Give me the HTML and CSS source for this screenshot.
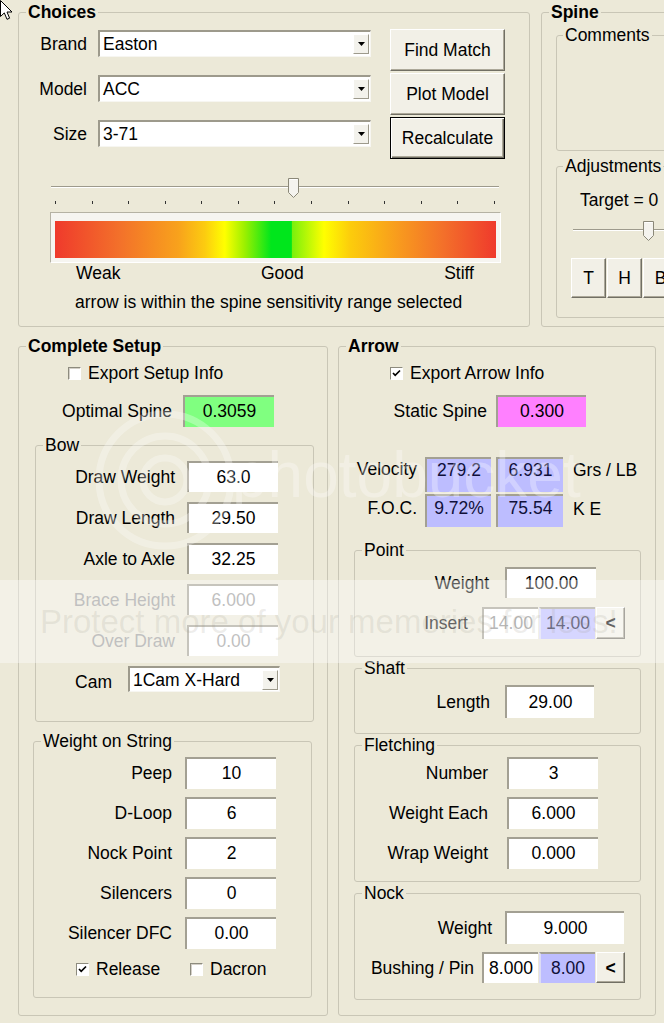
FILE: index.html
```html
<!DOCTYPE html>
<html>
<head>
<meta charset="utf-8">
<title>Spine Calculator</title>
<link rel="stylesheet" href="styles.css">
</head>
<body>
<div class="app">
  <div class="toprow">
    <fieldset class="grp choices">
      <legend class="title">Choices</legend>
      <div class="ch-top">
        <div class="ch-form">
          <div class="frow"><span class="flab">Brand</span><div class="combo"><span class="cval">Easton</span><span class="cbtn"><svg width="7" height="4" viewBox="0 0 7 4"><path d="M0 0H7L3.5 4Z" fill="#000"/></svg></span></div></div>
          <div class="frow"><span class="flab">Model</span><div class="combo"><span class="cval">ACC</span><span class="cbtn"><svg width="7" height="4" viewBox="0 0 7 4"><path d="M0 0H7L3.5 4Z" fill="#000"/></svg></span></div></div>
          <div class="frow"><span class="flab">Size</span><div class="combo"><span class="cval">3-71</span><span class="cbtn"><svg width="7" height="4" viewBox="0 0 7 4"><path d="M0 0H7L3.5 4Z" fill="#000"/></svg></span></div></div>
        </div>
        <div class="ch-btns">
          <button class="btn">Find Match</button>
          <button class="btn">Plot Model</button>
          <button class="btn btn-default">Recalculate</button>
        </div>
      </div>
      <div class="slider main-slider">
        <div class="track"></div>
        <svg class="thumb main-thumb" width="11" height="20" viewBox="0 0 11 20"><path d="M0.5 0.5H10.5V14.5L5.5 19.5L0.5 14.5Z" fill="#f4f3ee" stroke="#8b8878"/><path d="M1.5 1.5H9.5" stroke="#fff"/></svg>
      </div>
      <div class="ticks"><i></i><i></i><i></i><i></i><i></i><i></i><i></i><i></i><i></i><i></i><i></i><i></i><i></i></div>
      <div class="gauge"><div class="gauge-bar"></div></div>
      <div class="glabels"><span>Weak</span><span>Good</span><span>Stiff</span></div>
      <div class="msg">arrow is within the spine sensitivity range selected</div>
    </fieldset>

    <fieldset class="grp spine">
      <legend class="title">Spine</legend>
      <fieldset class="grp comments"><legend>Comments</legend></fieldset>
      <fieldset class="grp adjust">
        <legend>Adjustments</legend>
        <div class="target">Target = 0</div>
        <div class="slider adj-slider">
          <div class="track"></div>
          <svg class="thumb adj-thumb" width="11" height="20" viewBox="0 0 11 20"><path d="M0.5 0.5H10.5V14.5L5.5 19.5L0.5 14.5Z" fill="#f4f3ee" stroke="#8b8878"/><path d="M1.5 1.5H9.5" stroke="#fff"/></svg>
        </div>
        <div class="tbtns"><button class="btn tb-btn">T</button><button class="btn tb-btn">H</button><button class="btn tb-btn">B</button></div>
      </fieldset>
    </fieldset>
  </div>

  <div class="botrow">
    <fieldset class="grp setup">
      <legend class="title">Complete Setup</legend>
      <div class="cbrow setup-cb"><span class="cb"></span><span>Export Setup Info</span></div>
      <div class="hrow optimal"><span class="lab">Optimal Spine</span><span class="box green">0.3059</span></div>

      <fieldset class="grp bow">
        <legend>Bow</legend>
        <div class="rows bow-rows">
          <div class="brow"><span class="lab">Draw Weight</span><span class="box">63.0</span></div>
          <div class="brow"><span class="lab">Draw Length</span><span class="box">29.50</span></div>
          <div class="brow"><span class="lab">Axle to Axle</span><span class="box">32.25</span></div>
          <div class="brow dis"><span class="lab">Brace Height</span><span class="box">6.000</span></div>
          <div class="brow dis"><span class="lab">Over Draw</span><span class="box">0.00</span></div>
        </div>
        <div class="camrow"><span class="lab">Cam</span><div class="combo cam"><span class="cval">1Cam X-Hard</span><span class="cbtn"><svg width="7" height="4" viewBox="0 0 7 4"><path d="M0 0H7L3.5 4Z" fill="#000"/></svg></span></div></div>
      </fieldset>

      <fieldset class="grp wos">
        <legend>Weight on String</legend>
        <div class="rows wos-rows">
          <div class="wrow"><span class="lab">Peep</span><span class="box">10</span></div>
          <div class="wrow"><span class="lab">D-Loop</span><span class="box">6</span></div>
          <div class="wrow"><span class="lab">Nock Point</span><span class="box">2</span></div>
          <div class="wrow"><span class="lab">Silencers</span><span class="box">0</span></div>
          <div class="wrow"><span class="lab">Silencer DFC</span><span class="box">0.00</span></div>
        </div>
        <div class="wchecks">
          <div class="witem rel"><span class="cb checked"><svg width="11" height="11" viewBox="0 0 11 11"><path d="M2 5L4.2 7.3L9 2.5" fill="none" stroke="#000" stroke-width="1.7"/></svg></span><span>Release</span></div>
          <div class="witem"><span class="cb"></span><span>Dacron</span></div>
        </div>
      </fieldset>
    </fieldset>

    <fieldset class="grp arrow">
      <legend class="title">Arrow</legend>
      <div class="cbrow arrow-cb"><span class="cb checked"><svg width="11" height="11" viewBox="0 0 11 11"><path d="M2 5L4.2 7.3L9 2.5" fill="none" stroke="#000" stroke-width="1.7"/></svg></span><span>Export Arrow Info</span></div>
      <div class="hrow static"><span class="lab">Static Spine</span><span class="box pink">0.300</span></div>

      <div class="vrow vel"><span class="lab">Velocity</span><span class="box blue b1">279.2</span><span class="box blue b2">6.931</span><span class="unit">Grs / LB</span></div>
      <div class="vrow foc"><span class="lab">F.O.C.</span><span class="box blue b1">9.72%</span><span class="box blue b2">75.54</span><span class="unit">K E</span></div>

      <fieldset class="grp sub point">
        <legend>Point</legend>
        <div class="prow pw"><span class="lab">Weight</span><span class="box">100.00</span></div>
        <div class="prow pi"><span class="lab">Insert</span><span class="box gray s1">14.00</span><span class="box blue s2">14.00</span><button class="btn sbtn">&lt;</button></div>
      </fieldset>

      <fieldset class="grp sub shaft">
        <legend>Shaft</legend>
        <div class="prow sl"><span class="lab">Length</span><span class="box">29.00</span></div>
      </fieldset>

      <fieldset class="grp sub fletch">
        <legend>Fletching</legend>
        <div class="rows fl-rows">
          <div class="prow fr"><span class="lab">Number</span><span class="box">3</span></div>
          <div class="prow fr"><span class="lab">Weight Each</span><span class="box">6.000</span></div>
          <div class="prow fr"><span class="lab">Wrap Weight</span><span class="box">0.000</span></div>
        </div>
      </fieldset>

      <fieldset class="grp sub nock">
        <legend>Nock</legend>
        <div class="prow nw"><span class="lab">Weight</span><span class="box">9.000</span></div>
        <div class="prow nb"><span class="lab">Bushing / Pin</span><span class="box s1">8.000</span><span class="box blue s2">8.00</span><button class="btn sbtn">&lt;</button></div>
      </fieldset>
    </fieldset>
  </div>
</div>

<div class="wm-logo">
  <svg width="180" height="160" viewBox="0 0 180 160"><circle cx="90" cy="80" r="22" fill="none" stroke="#fff" stroke-width="7"/><circle cx="90" cy="80" r="44" fill="none" stroke="#fff" stroke-width="7"/><circle cx="90" cy="80" r="66" fill="none" stroke="#fff" stroke-width="7"/></svg>
</div>
<div class="wm-text">photobucket</div>
<div class="wm-band">Protect more of your memories for less!</div>

<svg class="cursor" width="14" height="21" viewBox="0 0 14 21"><path d="M0.5 0.5V16.5L4.3 12.9L7 19.3L9.6 18.2L7 12H12Z" fill="#fff" stroke="#000"/></svg>
</body>
</html>
```
FILE: styles.css
```css
html, body {
  margin: 0;
  padding: 0;
  overflow: hidden;
}
body {
  width: 664px;
  height: 1023px;
  background: #ECE9D8;
  font-family: "Liberation Sans", Arial, sans-serif;
  font-size: 17.5px;
  line-height: 20px;
  color: #000;
  position: relative;
}
.app {
  padding: 3px 0 0 18px;
  display: flex;
  flex-direction: column;
  gap: 10px;
}
.toprow, .botrow {
  display: flex;
  align-items: flex-start;
}

/* group boxes */
.grp {
  margin: 0;
  padding: 0;
  border: 1px solid #C9C6B6;
  border-radius: 3px;
  box-sizing: border-box;
  min-width: 0;
  flex: none;
}
.grp > legend {
  padding: 0 2px;
  margin-left: 7px;
  line-height: 18px;
}
.grp > legend.title {
  font-weight: bold;
}

/* choices */
.choices { width: 512px; height: 324px; }
.ch-top { display: flex; padding-top: 8px; }
.ch-form { display: flex; flex-direction: column; gap: 18px; padding-top: 1px; }
.frow { display: flex; align-items: center; height: 27px; }
.flab { width: 68px; text-align: right; margin-right: 11px; }
.combo {
  width: 273px;
  height: 27px;
  box-sizing: border-box;
  background: #fff;
  border-style: solid;
  border-width: 2px 1px 1px 2px;
  border-color: #9d9a8c #f7f6f1 #f7f6f1 #9d9a8c;
  display: flex;
  align-items: center;
  justify-content: space-between;
}
.cval { padding-left: 3px; white-space: nowrap; }
.cbtn {
  width: 16px;
  height: 20px;
  margin-right: 1px;
  box-sizing: border-box;
  background: #F3F2EC;
  border: 1px solid;
  border-color: #fff #9d9a8c #9d9a8c #fff;
  display: flex;
  align-items: center;
  justify-content: center;
}
.ch-btns { margin-left: 19px; display: flex; flex-direction: column; gap: 2px; }
.btn {
  font: inherit;
  color: #000;
  padding: 0;
  margin: 0;
  background: #F2F0E7;
  border: 1px solid;
  border-color: #fff #716F64 #716F64 #fff;
  box-shadow: inset -1px -1px 0 #ACA899;
  box-sizing: border-box;
}
.ch-btns .btn { width: 115px; height: 42px; }
.btn-default {
  border-color: #000;
  box-shadow: inset 1px 1px 0 #fff, inset -1px -1px 0 #716F64, inset -2px -2px 0 #ACA899;
}

/* sliders */
.slider { position: relative; height: 22px; }
.track {
  position: absolute;
  left: 0;
  right: 0;
  top: 10px;
  height: 0;
  border-top: 1px solid #9d9a8c;
  border-bottom: 1px solid #fff;
}
.thumb { position: absolute; top: 2px; }
.main-slider { margin: 17px 0 0 32px; width: 448px; }
.main-thumb { left: 237px; }
.ticks {
  margin: 3px 0 0 36px;
  width: 440px;
  height: 4px;
  display: flex;
  justify-content: space-between;
}
.ticks i { display: block; width: 1px; height: 3px; background: #333; }

.gauge {
  margin: 7px 0 0 31px;
  width: 451px;
  height: 51px;
  box-sizing: border-box;
  border: 1px solid;
  border-color: #B5B2A3 #fff #fff #B5B2A3;
  background: #F6F5F0;
  padding: 8px 4px 4px 4px;
}
.gauge-bar {
  height: 100%;
  background: linear-gradient(to right,
    #EF3A2C 0%, #F3722A 15%, #F8A21C 28%, #FCCC10 34%, #FFFF00 38.5%,
    #9CF000 43%, #00E61C 49%, #00E61C 53.6%, #7AF00C 53.8%, #FFFF00 61%,
    #FCCC0C 67%, #F89A1E 78%, #F3702A 88%, #EF3A2C 100%);
}
.glabels {
  margin-left: 57px;
  width: 398px;
  display: flex;
  justify-content: space-between;
}
.msg { margin: 9px 0 0 56px; white-space: nowrap; }

/* spine */
.spine { width: 200px; height: 324px; margin-left: 11px; }
.comments { width: 170px; height: 125px; margin: 5px 0 0 14px; }
.comments > legend { margin-left: 6px; }
.adjust { width: 170px; height: 161px; margin: 6px 0 0 14px; }
.adjust > legend { margin-left: 6px; }
.target { margin: 15px 0 0 23px; white-space: nowrap; }
.adj-slider { margin: 9px 0 0 16px; width: 150px; }
.adj-thumb { left: 70px; }
.tbtns { margin: 17px 0 0 14px; display: flex; gap: 1px; }
.tb-btn { width: 35px; height: 40px; }

/* bottom */
.setup { width: 310px; height: 679px; }
.arrow { width: 318px; height: 679px; margin-left: 10px; }

.cbrow { display: flex; align-items: center; height: 20px; margin-top: 8px; gap: 7px; white-space: nowrap; }
.setup-cb { padding-left: 49px; }
.arrow-cb { padding-left: 51px; }
.cb {
  width: 13px;
  height: 13px;
  box-sizing: border-box;
  background: #fff;
  border: 1px solid;
  border-color: #8d8b7e #fff #fff #8d8b7e;
  box-shadow: inset 1px 1px 0 #d4d0c8;
  display: flex;
  align-items: center;
  justify-content: center;
  flex: none;
}
.cb.checked { box-shadow: none; }

.lab { text-align: right; white-space: nowrap; flex: none; }
.box {
  box-sizing: border-box;
  background: #fff;
  border-style: solid;
  border-width: 2px 0 0 2px;
  border-color: #A3A093;
  display: flex;
  align-items: center;
  justify-content: center;
  padding-bottom: 2px;
  flex: none;
  white-space: nowrap;
}
.box.green { background: #80FF80; }
.box.pink { background: #FF80FF; }
.box.blue { background: #BDBDFF; color: #10103a; }
.box.gray { color: #8c8c8c; }

.hrow { display: flex; align-items: center; height: 32px; margin-top: 12px; }
.hrow .box { height: 32px; }
.optimal .lab { width: 153px; margin-right: 11px; }
.optimal .box { width: 91px; }
.static .lab { width: 148px; margin-right: 9px; }
.static .box { width: 90px; }

/* bow */
.bow { width: 279px; height: 286px; margin: 9px 0 0 16px; }
.rows { display: flex; flex-direction: column; }
.bow-rows { padding-top: 7px; gap: 10px; }
.brow { display: flex; align-items: center; height: 31px; }
.brow .lab { width: 139px; margin-right: 12px; }
.brow .box { width: 91px; height: 31px; }
.dis { color: #9a9a9a; }
.camrow { display: flex; align-items: flex-start; margin-top: 10px; height: 26px; }
.camrow .lab { width: 76px; margin-right: 16px; margin-top: 6px; }
.combo.cam { width: 152px; height: 26px; }
.combo.cam .cbtn { height: 20px; }

/* weight on string */
.wos { width: 279px; height: 266px; margin: 10px 0 0 14px; }
.wos-rows { padding-top: 7px; gap: 8px; }
.wrow { display: flex; align-items: center; height: 32px; }
.wrow .lab { width: 138px; margin-right: 13px; }
.wrow .box { width: 91px; height: 32px; }
.wchecks { display: flex; align-items: center; height: 20px; margin: 10px 0 0 42px; }
.witem { display: flex; align-items: center; gap: 7px; }
.witem.rel { width: 114px; }

/* arrow */
.vrow { display: flex; align-items: stretch; }
.vel { margin-top: 30px; height: 35px; }
.foc { margin-top: 2px; height: 33px; }
.vrow .lab { width: 78px; margin-right: 8px; padding-top: 2px; box-sizing: border-box; }
.vrow .box { align-items: flex-start; padding: 1px 0 0 0; }
.vrow .b1 { width: 66px; margin-right: 5px; }
.vrow .b2 { width: 67px; margin-right: 10px; }
.unit { padding-top: 3px; white-space: nowrap; }
.foc .lab { padding-top: 4px; }
.foc .box { padding-top: 2px; }
.foc .unit { padding-top: 5px; }

.sub { width: 287px; margin-left: 15px; }
.point { height: 116px; margin-top: 14px; }
.shaft { height: 75px; margin-top: 2px; }
.fletch { height: 146px; margin-top: 2px; }
.nock { height: 116px; margin-top: 2px; }

.prow { display: flex; align-items: center; }
.pw { margin-top: 8px; height: 31px; }
.pw .lab { width: 134px; margin-right: 16px; }
.pw .box { width: 91px; height: 31px; }
.pi { margin-top: 9px; height: 32px; }
.pi .lab { width: 113px; margin-right: 14px; }
.s1 { width: 56px; height: 32px; margin-right: 1px; }
.s2 { width: 56px; height: 32px; margin-right: 1px; border-left-color: #dcdcf5; }
.sbtn { width: 29px; height: 32px; font-weight: bold; }

.sl { margin-top: 8px; height: 33px; }
.sl .lab { width: 135px; margin-right: 15px; }
.sl .box { width: 89px; height: 33px; }

.fl-rows { padding-top: 3px; gap: 8px; }
.fr { height: 32px; }
.fr .lab { width: 133px; margin-right: 19px; }
.fr .box { width: 91px; height: 32px; }

.nw { margin-top: 9px; height: 33px; }
.nw .lab { width: 137px; margin-right: 13px; }
.nw .box { width: 119px; height: 33px; }
.nb { margin-top: 8px; height: 31px; }
.nb .lab { width: 119px; margin-right: 8px; }
.nb .s1, .nb .s2 { height: 31px; }
.nb .sbtn { height: 31px; }

/* watermark overlay */
.wm-band {
  position: absolute;
  left: 0;
  top: 580px;
  width: 664px;
  height: 83px;
  background: rgba(255, 255, 255, 0.38);
  color: rgba(150, 145, 130, 0.16);
  font-size: 33px;
  line-height: 83px;
  padding-left: 40px;
  box-sizing: border-box;
  white-space: nowrap;
  pointer-events: none;
}
.wm-logo {
  position: absolute;
  left: 75px;
  top: 400px;
  opacity: 0.3;
  pointer-events: none;
}
.wm-text {
  position: absolute;
  left: 232px;
  top: 440px;
  font-size: 64px;
  line-height: 70px;
  color: rgba(255, 255, 255, 0.3);
  white-space: nowrap;
  pointer-events: none;
}
.cursor {
  position: absolute;
  left: 0;
  top: 0;
}
```
